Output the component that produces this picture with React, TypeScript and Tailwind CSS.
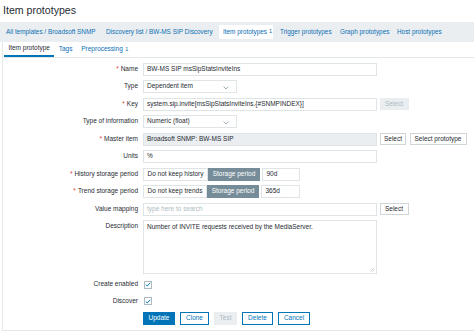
import React from "react";

const BLUE = "text-[#0a6eb4]";

function Label({ children, req }: { children: React.ReactNode; req?: boolean }) {
  return (
    <div className="flex items-center justify-end whitespace-nowrap text-[#1f2c33]">
      {req && <span className="text-[#e33734] mr-[2px]">*</span>}
      {children}
    </div>
  );
}

function Chevron() {
  return (
    <svg width="6" height="4" viewBox="0 0 6 4" className="absolute right-[7px] top-[5px]">
      <path d="M0.5 0.5 L3 3 L5.5 0.5" fill="none" stroke="#8a9aa3" strokeWidth="0.8" />
    </svg>
  );
}

function Input({ value, w = "w-[234px]", gray, placeholder }: { value?: string; w?: string; gray?: boolean; placeholder?: string }) {
  return (
    <div
      className={`${w} h-[13px] border border-[#dfe4e7] ${gray ? "bg-[#ebeef0]" : "bg-white"} flex items-center pl-[3px] whitespace-nowrap overflow-hidden ${placeholder ? "text-[#acbbc2]" : "text-[#1f2c33]"}`}
    >
      {value ?? placeholder}
    </div>
  );
}

function Select({ value }: { value: string }) {
  return (
    <div className="relative w-[94px] h-[13px] border border-[#dfe4e7] bg-white flex items-center pl-[3px] text-[#1f2c33] whitespace-nowrap">
      {value}
      <Chevron />
    </div>
  );
}

function GrayBtn({ children, w, disabled }: { children: React.ReactNode; w: string; disabled?: boolean }) {
  return (
    <div
      className={`${w} h-[12px] border flex items-center justify-center whitespace-nowrap ${
        disabled ? "bg-[#ebeef0] border-[#ebeef0] text-[#acbbc2]" : "bg-white border-[#cfd6da] text-[#1f2c33]"
      }`}
    >
      {children}
    </div>
  );
}

function Check() {
  return (
    <div className="w-[8px] h-[8px] border border-[#acbbc2] bg-white flex items-center justify-center ml-[1px]">
      <svg width="6" height="5" viewBox="0 0 6 5">
        <path d="M0.8 2.6 L2.3 4 L5.2 0.8" fill="none" stroke="#0275b8" strokeWidth="1" />
      </svg>
    </div>
  );
}

function Segment({ a, w1, w2, inputW, val }: { a: string; w1: string; w2: string; inputW: string; val: string }) {
  return (
    <div className="flex items-center h-[13px]">
      <div className={`${w1} h-[13px] border border-[#dfe4e7] bg-white flex items-center justify-center whitespace-nowrap text-[#1f2c33]`}>{a}</div>
      <div className={`${w2} h-[13px] bg-[#768d99] border border-[#768d99] flex items-center justify-center whitespace-nowrap text-white`}>Storage period</div>
      <div className={`${inputW} ml-[1.5px] h-[13px] border border-[#dfe4e7] bg-white flex items-center pl-[4px] text-[#1f2c33]`}>{val}</div>
    </div>
  );
}

export default function App() {
  return (
    <div className="w-[474px] h-[331px] bg-white overflow-hidden font-['Liberation_Sans',Arial,sans-serif] text-[6.5px] leading-none text-[#1f2c33]">
      <div className="h-[22px] pl-[3px] pt-[3px]">
        <div className="text-[10.6px] leading-[14px] text-[#1f2c33]">Item prototypes</div>
      </div>
      <div className={`h-[20px] bg-[#ebeef0] flex items-center pl-[6px] text-[6.4px] ${BLUE} whitespace-nowrap`}>
        <div className="w-[100px] shrink-0">All templates / Broadsoft SNMP</div>
        <div className="w-[113px] shrink-0">Discovery list / BW-MS SIP Discovery</div>
        <div className="w-[54px] shrink-0 h-[14px] bg-white flex items-center pl-[4px]">
          Item prototypes <span className="ml-[2px] text-[5.5px] -translate-y-[0.5px]">1</span>
        </div>
        <div className="ml-[7px] w-[60px] shrink-0">Trigger prototypes</div>
        <div className="w-[57px] shrink-0">Graph prototypes</div>
        <div className="shrink-0">Host prototypes</div>
      </div>
      <div className="ml-[2px] h-[289px] border-l border-b border-[#e4e8eb]">
        <div className="h-[16px] flex items-stretch border-b border-[#e4e8eb] whitespace-nowrap">
          <div className="px-[4.4px] flex items-center border-b-2 border-[#0275b8] text-[#1f2c33] ml-[1px]">Item prototype</div>
          <div className={`px-[4.4px] flex items-center ${BLUE}`}>Tags</div>
          <div className={`px-[4.4px] flex items-center ${BLUE}`}>
            Preprocessing <span className="ml-[2.5px] text-[5.5px]">1</span>
          </div>
        </div>
        <div className="pt-[4.5px] grid grid-cols-[135px_1fr] gap-x-[5px] gap-y-[4.5px] auto-rows-min">
          <Label req>Name</Label>
          <Input value="BW-MS SIP msSipStatsInviteIns" />

          <Label>Type</Label>
          <Select value="Dependent item" />

          <Label req>Key</Label>
          <div className="flex items-center gap-[2.5px]">
            <Input value="system.sip.invite[msSipStatsInviteIns.{#SNMPINDEX}]" />
            <GrayBtn w="w-[29px]" disabled>Select</GrayBtn>
          </div>

          <Label>Type of information</Label>
          <Select value="Numeric (float)" />

          <Label req>Master item</Label>
          <div className="flex items-center">
            <Input value="Broadsoft SNMP: BW-MS SIP" gray />
            <div className="ml-[3px]"><GrayBtn w="w-[26px]">Select</GrayBtn></div>
            <div className="ml-[3.5px]"><GrayBtn w="w-[57px]">Select prototype</GrayBtn></div>
          </div>

          <Label>Units</Label>
          <Input value="%" />

          <Label req>History storage period</Label>
          <Segment a="Do not keep history" w1="w-[65px]" w2="w-[52px]" inputW="w-[38px]" val="90d" />

          <Label req>Trend storage period</Label>
          <Segment a="Do not keep trends" w1="w-[64px]" w2="w-[52px]" inputW="w-[39px]" val="365d" />

          <Label>Value mapping</Label>
          <div className="flex items-center gap-[2.5px]">
            <Input placeholder="type here to search" />
            <GrayBtn w="w-[29px]">Select</GrayBtn>
          </div>

          <div className="flex justify-end pt-[3px] text-[#1f2c33]">Description</div>
          <div className="relative w-[234px] h-[54px] border border-[#dfe4e7] bg-white pl-[3px] pt-[3px] text-[#1f2c33] whitespace-nowrap">
            Number of INVITE requests received by the MediaServer.
            <svg width="5" height="5" viewBox="0 0 5 5" className="absolute right-[1px] bottom-[1px]">
              <path d="M4.5 0.5 L0.5 4.5 M4.5 2.5 L2.5 4.5" stroke="#b7c1c7" strokeWidth="0.7" />
            </svg>
          </div>

          <div className="h-[12px] flex items-center justify-end">Create enabled</div>
          <div className="h-[12px] flex items-center"><Check /></div>

          <div className="h-[12px] flex items-center justify-end">Discover</div>
          <div className="h-[12px] flex items-center"><Check /></div>

          <div />
          <div className="flex items-center h-[13px]">
            <div className="w-[32px] h-[13px] bg-[#0275b8] border border-[#0275b8] text-white flex items-center justify-center">Update</div>
            <div className="ml-[5px] w-[29px] h-[13px] bg-white border border-[#0275b8] text-[#0275b8] flex items-center justify-center">Clone</div>
            <div className="ml-[5px] w-[23px] h-[13px] bg-[#ebeef0] border border-[#ebeef0] text-[#acbbc2] flex items-center justify-center">Test</div>
            <div className="ml-[5px] w-[31px] h-[13px] bg-white border border-[#0275b8] text-[#0275b8] flex items-center justify-center">Delete</div>
            <div className="ml-[5px] w-[32px] h-[13px] bg-white border border-[#0275b8] text-[#0275b8] flex items-center justify-center">Cancel</div>
          </div>
        </div>
      </div>
    </div>
  );
}
